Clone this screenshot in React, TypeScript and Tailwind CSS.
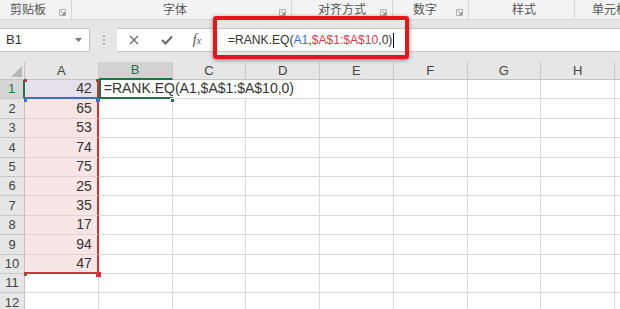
import React from "react";

const COLS = ["A", "B", "C", "D", "E", "F", "G", "H", "I"];
const VALUES = [42, 65, 53, 74, 75, 25, 35, 17, 94, 47];
const CW = "w-[73.75px]";

function Launcher() {
  return (
    <svg width="7" height="7" viewBox="0 0 7 7" className="mb-[3px]">
      <path d="M0.5 0.5 H6.5 V6.5 H0.5 Z" fill="none" stroke="#b0b0b0" strokeWidth="1" />
      <path d="M2 2 L5.5 5.5 M5.5 3 V5.5 H3" fill="none" stroke="#909090" strokeWidth="1" />
    </svg>
  );
}

function Group({ w, pl, label, launcher = true, last = false }: { w: string; pl: string; label: string; launcher?: boolean; last?: boolean }) {
  return (
    <div className={`${w} shrink-0 h-full flex items-end overflow-hidden ${last ? "" : "border-r border-[#d6d6d6]"}`}>
      <div className={`${pl} h-full flex items-center text-[12px] text-[#555] leading-none pb-[1px] whitespace-nowrap`}>{label}</div>
      {launcher && <div className="ml-auto mr-[5px] flex items-end h-full"><Launcher /></div>}
    </div>
  );
}

export default function App() {
  return (
    <div className="w-[620px] h-[309px] overflow-hidden relative bg-white font-['Liberation_Sans','Noto_Sans_CJK_SC',sans-serif]">
      {/* Ribbon group labels */}
      <div className="h-[20px] bg-[#f3f3f3] border-b border-[#d8d8d8] flex overflow-hidden font-['Noto_Sans_CJK_SC',sans-serif]">
        <Group w="w-[72px]" pl="pl-[10px]" label="剪贴板" />
        <Group w="w-[220px]" pl="pl-[91px]" label="字体" />
        <Group w="w-[101px]" pl="pl-[26px]" label="对齐方式" />
        <Group w="w-[76px]" pl="pl-[20px]" label="数字" />
        <Group w="w-[106px]" pl="pl-[43px]" label="样式" launcher={false} />
        <Group w="w-[60px]" pl="pl-[17px]" label="单元格" launcher={false} last />
      </div>
      <div className="h-[8px] bg-[#e6e6e6]" />
      {/* Formula bar */}
      <div className="h-[24px] flex bg-[#e6e6e6]">
        <div className="w-[90px] shrink-0 h-full bg-white border border-[#c6c6c6] border-l-0 flex items-center justify-between pl-[6px] pr-[7px]">
          <span className="text-[13px] text-[#333]">B1</span>
          <svg width="7" height="4" viewBox="0 0 7 4"><path d="M0 0 H7 L3.5 4 Z" fill="#777" /></svg>
        </div>
        <div className="w-[27px] shrink-0 h-full flex flex-col items-center justify-center gap-[2px]">
          <span className="w-[2px] h-[2px] bg-[#a8a8a8]" />
          <span className="w-[2px] h-[2px] bg-[#a8a8a8]" />
          <span className="w-[2px] h-[2px] bg-[#a8a8a8]" />
        </div>
        <div className="flex-1 h-full bg-white border-y border-[#c6c6c6] flex items-center">
          <div className="w-[33px] flex justify-center">
            <svg width="10" height="10" viewBox="0 0 10 10"><path d="M1 1 L9 9 M9 1 L1 9" stroke="#6a6a6a" strokeWidth="1.3" /></svg>
          </div>
          <div className="w-[34px] flex justify-center">
            <svg width="12" height="10" viewBox="0 0 12 10"><path d="M1 5 L4.5 8.5 L11 1.5" fill="none" stroke="#6a6a6a" strokeWidth="2" /></svg>
          </div>
          <div className="w-[26px] flex justify-center">
            <span className="font-['Liberation_Serif',serif] italic text-[14px] text-[#555] leading-none">f<span className="text-[10px]">x</span></span>
          </div>
          <div className="pl-[18px] flex items-center text-[12.1px] text-[#333] leading-none">
            <span>=RANK.EQ(</span>
            <span className="text-[#3d6fc6]">A1</span>
            <span>,</span>
            <span className="text-[#d23d47]">$A$1:$A$10</span>
            <span>,0)</span>
            <span className="w-px h-[15px] bg-black ml-[1px]" />
          </div>
        </div>
      </div>
      <div className="h-[10px] bg-[#e6e6e6]" />
      {/* Grid */}
      <div className="flex flex-col">
        {/* Header row */}
        <div className="flex h-[18px] bg-[#e6e6e6] text-[13px] text-[#444]">
          <div className="w-[25px] shrink-0 h-full border-r border-b border-[#c2c2c2] flex items-end justify-end p-[2px]">
            <svg width="11" height="11" viewBox="0 0 11 11"><path d="M11 0 V11 H0 Z" fill="#b7b7b7" /></svg>
          </div>
          {COLS.map((c) => (
            <div
              key={c}
              className={`${CW} shrink-0 h-full flex items-center justify-center border-r border-[#c8c8c8] ${
                c === "B" ? "bg-[#d2d2d2] text-[#217346] border-b-2 border-b-[#217346]" : "border-b border-b-[#c2c2c2]"
              }`}
            >
              {c}
            </div>
          ))}
        </div>
        {/* Data rows */}
        {Array.from({ length: 12 }, (_, i) => i + 1).map((r) => (
          <div key={r} className="flex h-[19.4px] shrink-0">
            <div
              className={`w-[25px] h-full shrink-0 flex items-center justify-center text-[13px] border-b border-[#c8c8c8] ${
                r === 1
                  ? "bg-[#d6d6d6] text-[#217346] border-r-2 border-r-[#217346]"
                  : "bg-[#e6e6e6] text-[#444] border-r border-r-[#c2c2c2]"
              }`}
            >
              {r}
            </div>
            {r <= 10 ? (
              <div
                className={`${CW} h-full shrink-0 flex items-center justify-end pr-[5px] text-[14px] text-[#333] border-r-2 border-r-[#c8363c] ${
                  r === 1
                    ? "bg-[#e6e0ec] border-b-2 border-b-[#3d6fc6]"
                    : r === 10
                    ? "bg-[#f8e5e5] border-b-2 border-b-[#c8363c]"
                    : "bg-[#f8e5e5] border-b border-b-[#e3d2d2]"
                }`}
              >
                {VALUES[r - 1]}
              </div>
            ) : (
              <div className={`${CW} h-full shrink-0 border-r border-b border-[#d9d9d9]`} />
            )}
            {r === 1 ? (
              <>
                <div className={`${CW} h-full shrink-0 relative z-10 border-l-2 border-l-[#217346] border-b-2 border-b-[#217346] flex items-center pl-[3px] text-[14px] text-[#333] whitespace-nowrap overflow-visible`}>
                  =RANK.EQ(A1,$A$1:$A$10,0)
                </div>
                <div className={`${CW} h-full shrink-0 bg-white border-b border-[#d9d9d9]`} />
                <div className={`${CW} h-full shrink-0 bg-white border-r border-b border-[#d9d9d9]`} />
              </>
            ) : (
              COLS.slice(1, 4).map((c) => <div key={c} className={`${CW} h-full shrink-0 border-r border-b border-[#d9d9d9]`} />)
            )}
            {COLS.slice(4).map((c) => (
              <div key={c} className={`${CW} h-full shrink-0 border-r border-b border-[#d9d9d9]`} />
            ))}
          </div>
        ))}
      </div>

      {/* Selection corner marks */}
      <div className="absolute left-[24px] top-[79px] w-[3px] h-[3px] bg-[#c8363c]" />
      <div className="absolute left-[96px] top-[79px] w-[3px] h-[3px] bg-[#c8363c]" />
      <div className="absolute left-[24px] top-[98px] w-[3px] h-[4px] bg-[#3d6fc6]" />
      <div className="absolute left-[96px] top-[98px] w-[4px] h-[4px] bg-[#3d6fc6]" />
      <div className="absolute left-[24px] top-[272px] w-[3px] h-[4px] bg-[#c8363c]" />
      <div className="absolute left-[96px] top-[272px] w-[5px] h-[5px] bg-[#c8363c]" />
      <div className="absolute z-20 left-[170px] top-[98px] w-[5px] h-[5px] bg-[#217346] border border-white" />

      {/* Red highlight box */}
      <div className="absolute left-[213px] top-[16px] w-[196px] h-[43px] border-[4px] border-[#e8141b] rounded-[3px] shadow-[0_1px_4px_rgba(0,0,0,0.45)]" />
    </div>
  );
}
